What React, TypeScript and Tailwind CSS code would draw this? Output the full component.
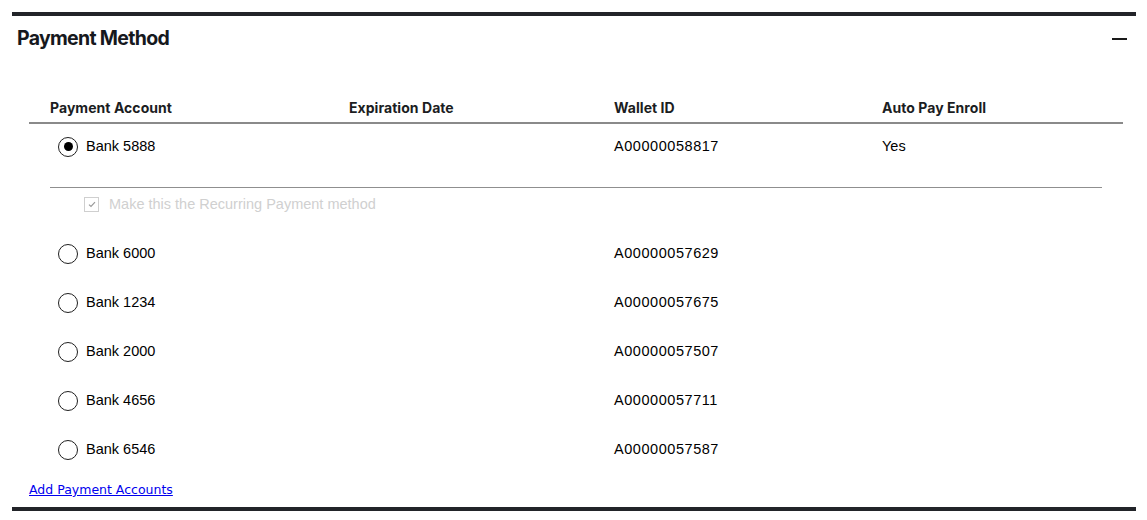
const accounts = [
  { name: 'Bank 6000', wallet: 'A00000057629' },
  { name: 'Bank 1234', wallet: 'A00000057675' },
  { name: 'Bank 2000', wallet: 'A00000057507' },
  { name: 'Bank 4656', wallet: 'A00000057711' },
  { name: 'Bank 6546', wallet: 'A00000057587' },
];

const Radio = ({ checked }: { checked?: boolean }) => (
  <span className="flex h-[20px] w-[20px] shrink-0 items-center justify-center rounded-full border-[1.5px] border-[#1f1f1f] bg-white">
    {checked && <span className="h-[9px] w-[9px] rounded-full bg-black" />}
  </span>
);

export default function App() {
  return (
    <div className="h-[520px] w-[1147px] bg-white pl-3 pr-[11px] pt-3 font-['Liberation_Sans',Arial,sans-serif] text-black">
      <div className="border-b-4 border-t-4 border-[#222429]">
        {/* Header */}
        <div className="flex h-[45px] items-center justify-between pl-[5px] pr-[9px]">
          <h2 className="font-['Inter',sans-serif] text-[19.5px] font-bold tracking-[-0.7px] text-[#16181d]">
            Payment Method
          </h2>
          <span className="h-[2px] w-[15px] bg-[#1a1a1a]" />
        </div>

        <div className="ml-[17px] mr-[13px]">
          {/* Column headers */}
          <div className="grid grid-cols-[299px_265px_268px_1fr] border-b-2 border-[#8a8a8a] pb-[6px] pl-[21px] pt-[39px] font-['Inter',sans-serif] text-[14px] font-bold leading-4 tracking-[0.05px] text-[#1b1d22]">
            <div>Payment Account</div>
            <div>Expiration Date</div>
            <div>Wallet ID</div>
            <div>Auto Pay Enroll</div>
          </div>

          {/* Selected row */}
          <div className="grid h-[44px] grid-cols-[299px_265px_268px_1fr] items-center pl-[21px] pt-[1px] text-[14.5px]">
            <label className="col-span-2 flex items-center gap-2 pl-[8px]">
              <Radio checked />
              <span>Bank 5888</span>
            </label>
            <div className="tracking-[0.55px]">A00000058817</div>
            <div>Yes</div>
          </div>
          <div className="mx-[21px] mt-[19px] h-px bg-[#8f8f8f]" />
          <div className="flex h-[32px] items-center gap-[10px] pl-[55px] pt-[1px] text-[14.5px] text-[#d0d0d0]">
            <span className="flex h-[15px] w-[15px] items-center justify-center border border-[#cfcfcf] bg-white">
              <svg width="8" height="7" viewBox="0 0 8 7" fill="none">
                <path d="M1 3.6 L3 5.4 L7 1.2" stroke="#9a9a9a" strokeWidth="1.2" />
              </svg>
            </span>
            <span>Make this the Recurring Payment method</span>
          </div>

          {/* Other accounts */}
          <div className="mt-[9px]">
            {accounts.map((a) => (
              <div
                key={a.name}
                className="grid h-[49px] grid-cols-[299px_265px_268px_1fr] items-center pl-[21px] text-[14.5px]"
              >
                <label className="col-span-2 flex items-center gap-2 pl-[8px]">
                  <Radio />
                  <span>{a.name}</span>
                </label>
                <div className="tracking-[0.55px]">{a.wallet}</div>
                <div />
              </div>
            ))}
          </div>

          <a
            href="#"
            className="mb-[9px] mt-[8px] block w-fit font-['DejaVu_Sans',sans-serif] text-[12.5px] leading-4 text-[#0000ee] underline"
          >
            Add Payment Accounts
          </a>
        </div>
      </div>
    </div>
  );
}
